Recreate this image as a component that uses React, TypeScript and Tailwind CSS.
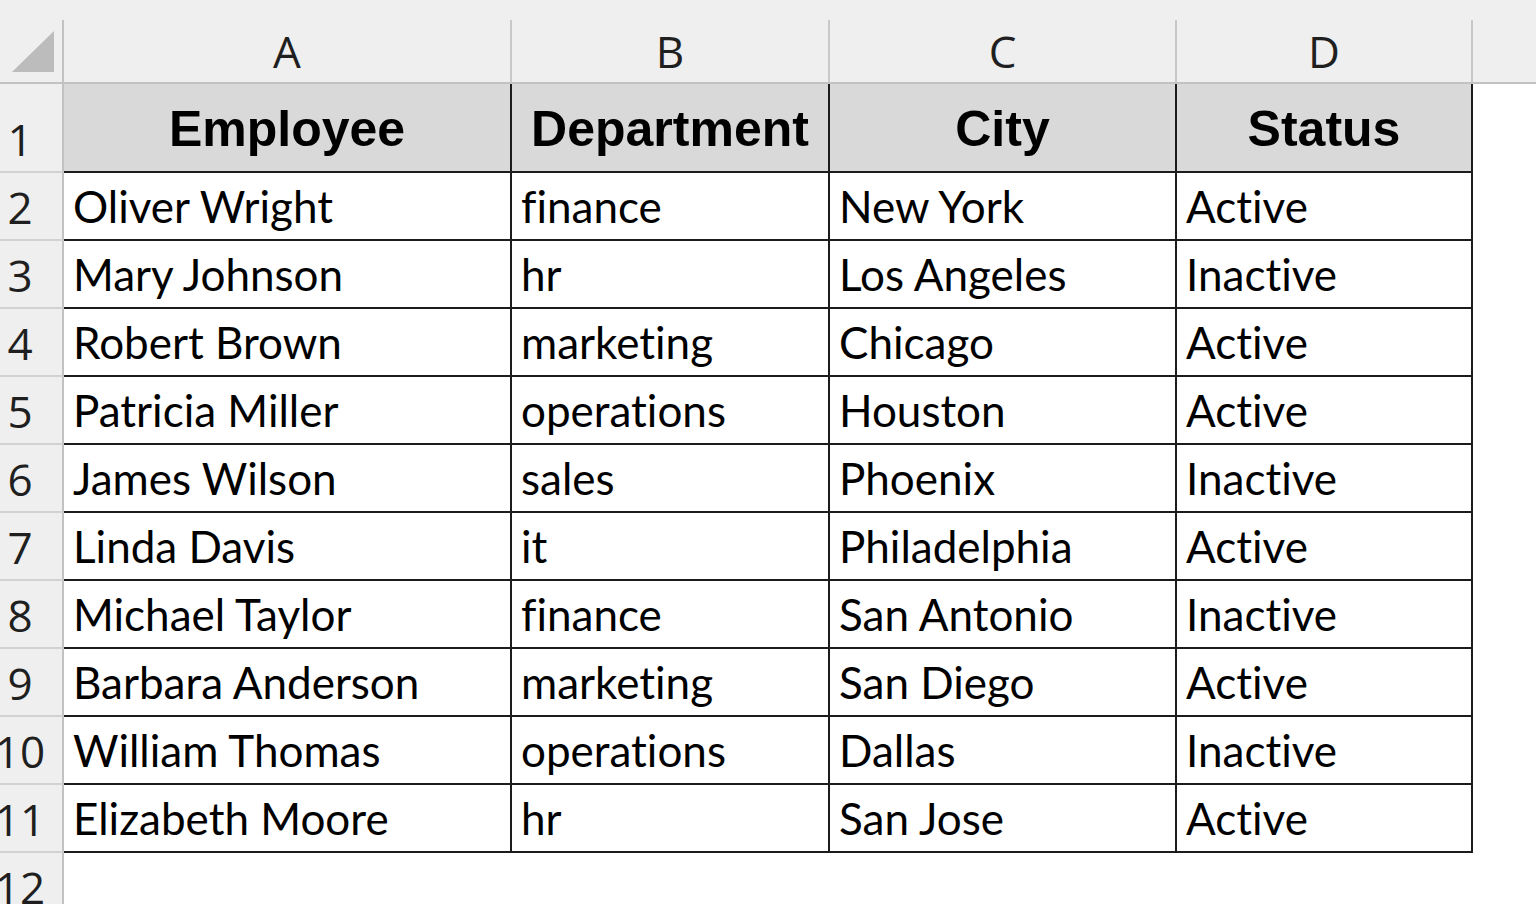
import React from "react";

const cols = [
  { l: "A", w: "w-[448px]" },
  { l: "B", w: "w-[318px]" },
  { l: "C", w: "w-[347px]" },
  { l: "D", w: "w-[296px]" },
];

const header = ["Employee", "Department", "City", "Status"];

const rows: string[][] = [
  ["Oliver Wright", "finance", "New York", "Active"],
  ["Mary Johnson", "hr", "Los Angeles", "Inactive"],
  ["Robert Brown", "marketing", "Chicago", "Active"],
  ["Patricia Miller", "operations", "Houston", "Active"],
  ["James Wilson", "sales", "Phoenix", "Inactive"],
  ["Linda Davis", "it", "Philadelphia", "Active"],
  ["Michael Taylor", "finance", "San Antonio", "Inactive"],
  ["Barbara Anderson", "marketing", "San Diego", "Active"],
  ["William Thomas", "operations", "Dallas", "Inactive"],
  ["Elizabeth Moore", "hr", "San Jose", "Active"],
];

const hdrFont = "font-['Open_Sans',sans-serif] text-[44px] leading-none text-[#1f1f1f]";

function RowHead({ n }: { n: number }) {
  return (
    <div className="w-[64px] shrink-0 bg-[#efefef] border-r-2 border-b-2 border-r-[#c2c2c2] border-b-[#d2d2d2] overflow-hidden flex items-end pb-[10px]">
      <div className={"w-[86px] -ml-[23px] shrink-0 text-center " + hdrFont}>{n}</div>
    </div>
  );
}

export default function App() {
  return (
    <div className="w-[1536px] h-[904px] overflow-hidden bg-white flex flex-col">
      {/* column headers */}
      <div className="flex h-[84px] shrink-0 bg-[#efefef] border-b-2 border-[#c2c2c2]">
        <div className="w-[64px] shrink-0 flex flex-col">
          <div className="h-[20px]" />
          <div className="flex-1 border-r-2 border-[#c2c2c2] flex items-end justify-end pr-[8px] pb-[10px]">
            <svg width="42" height="41" viewBox="0 0 42 41">
              <polygon points="0,41 42,41 42,0" fill="#bcbcbc" />
            </svg>
          </div>
        </div>
        {cols.map((c) => (
          <div key={c.l} className={c.w + " shrink-0 flex flex-col"}>
            <div className="h-[20px]" />
            <div className={"flex-1 border-r-2 border-[#c8c8c8] flex items-end justify-center pb-[9px] " + hdrFont}>
              {c.l}
            </div>
          </div>
        ))}
        <div className="flex-1" />
      </div>

      {/* row 1 header */}
      <div className="flex h-[89px] shrink-0">
        <RowHead n={1} />
        {header.map((h, i) => (
          <div
            key={h}
            className={
              cols[i].w +
              " shrink-0 bg-[#d9d9d9] border-r-2 border-b-2 border-[#1c1c1c] flex items-end justify-center pb-[17px] font-['Liberation_Sans',Arial,sans-serif] font-bold text-[50px] leading-none text-black"
            }
          >
            {h}
          </div>
        ))}
        <div className="flex-1" />
      </div>

      {rows.map((r, ri) => (
        <div key={ri} className="flex h-[68px] shrink-0">
          <RowHead n={ri + 2} />
          {r.map((v, ci) => (
            <div
              key={ci}
              className={
                cols[ci].w +
                " shrink-0 border-r-2 border-b-2 border-[#1c1c1c] flex items-end pl-[9px] pb-[11px] font-['Lato',sans-serif] text-[44px] leading-none text-black whitespace-nowrap overflow-hidden [font-variant-ligatures:none]"
              }
            >
              {v}
            </div>
          ))}
          <div className="flex-1" />
        </div>
      ))}

      <div className="flex h-[68px] shrink-0">
        <RowHead n={12} />
        <div className="flex-1" />
      </div>
    </div>
  );
}
